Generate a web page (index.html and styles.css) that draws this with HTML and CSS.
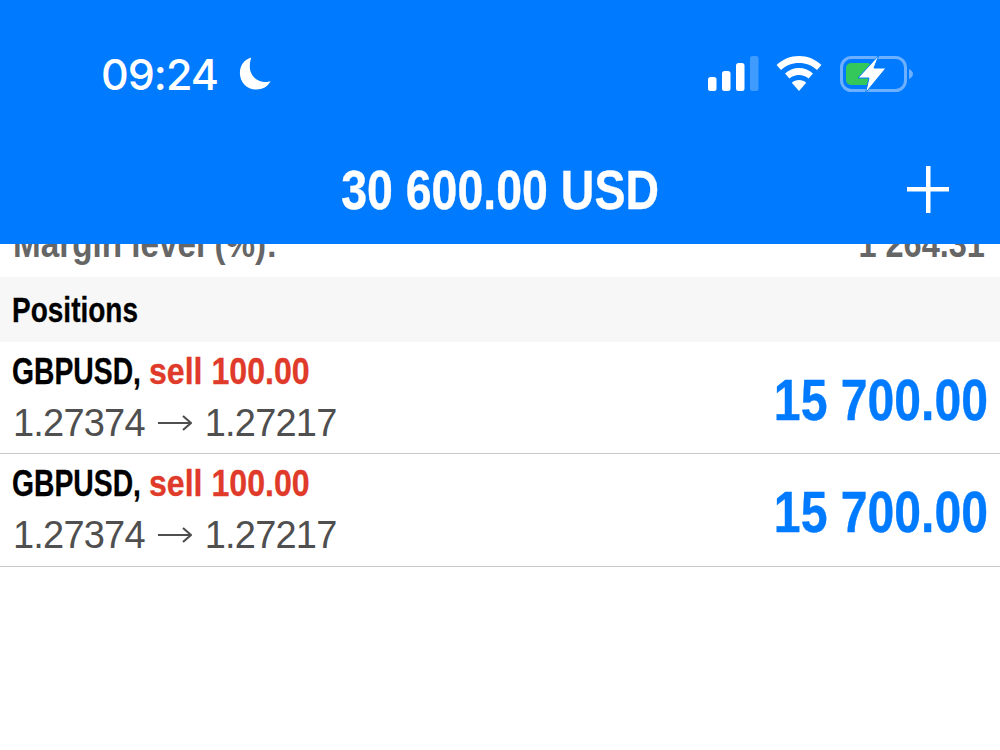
FILE: index.html
```html
<!DOCTYPE html>
<html>

<head>
    <meta charset="utf-8">
    <link rel="stylesheet" href="styles.css">
</head>

<body>
    <div class="top">
        <div class="status">
            <div class="clock">
                <span class="time">09:24</span>
                <svg class="moon" width="34" height="38" viewBox="0 0 36 38">
                    <path fill="#fff" d="M14 1.500C6.500 3.500 2 10 2 18c0 10 7.500 17.500 17.500 17.500 6.500 0 12-3 15-9-1.500.7-3.500 1-5.500 1C19.500 27.500 12.500 20 12.500 11c0-3.500.5-6.500 1.500-9.500z" />
                </svg>
            </div>
            <div class="icons">
                <svg class="signal" width="51" height="36" viewBox="0 0 51 36">
                    <rect x="0" y="21" width="8.500" height="14" rx="2.500" fill="#fff" />
                    <rect x="14" y="15" width="8.500" height="20" rx="2.500" fill="#fff" />
                    <rect x="28" y="7" width="8.500" height="28" rx="2.500" fill="#fff" />
                    <rect x="42" y="0" width="8.500" height="35" rx="2.500" fill="#fff" opacity=".25" />
                </svg>
                <svg class="wifi" width="46" height="36" viewBox="0 0 46 36">
                    <path fill="#fff" d="M23 0C14.500 0 6.500 3.300.6 9l4.400 5C9.800 9.500 16 7 23 7s13.200 2.500 18 7l4.400-5C39.500 3.300 31.500 0 23 0z" />
                    <path fill="#fff" d="M23 12c-5.500 0-10.300 2-14 5.500l4.400 5C16 20.200 19.300 19 23 19s7 1.200 9.600 3.500l4.400-5C33.300 14 28.500 12 23 12z" />
                    <path fill="#fff" d="M23 24c-2.800 0-5.300 1-7.200 2.800L23 35l7.200-8.200C28.300 25 25.800 24 23 24z" />
                </svg>
                <svg class="battery" width="74" height="38" viewBox="0 0 74 38">
                    <rect x="1.500" y="2.500" width="64" height="33" rx="10" fill="none" stroke="#6db0ff" stroke-width="3" />
                    <rect x="6" y="8" width="26" height="22" rx="5" fill="#34c759" />
                    <path fill="#6db0ff" d="M69 14c2.500 1 4 3 4 5s-1.500 4-4 5z" />
                    <path fill="#fff" stroke="#007aff" stroke-width="1" stroke-linejoin="round" d="M39 0 18 23h11l-3.500 15L46 13H34z" />
                </svg>
            </div>
        </div>
        <div class="bar">
            <span class="balance"><span class="squeeze">30 600.00 USD</span></span>
            <svg class="plus" width="42" height="47" viewBox="0 0 42 47">
                <rect x="19" y="0" width="4.500" height="47" fill="#fff" />
                <rect x="0" y="21" width="42" height="4.500" fill="#fff" />
            </svg>
        </div>
    </div>

    <div class="cut-row">
        <span class="squeeze-left">Margin level (%):</span>
        <span class="squeeze-right">1 264.31</span>
    </div>

    <div class="section">
        <span class="squeeze-left">Positions</span>
    </div>

    <div class="pos">
        <div class="pos-info">
            <div class="pos-title">GBPUSD, <span class="sell">sell 100.00</span></div>
            <div class="pos-price">
                <span>1.27374</span>
                <svg class="arrow" width="34" height="18" viewBox="0 0 34 18">
                    <path fill="none" stroke="#4f4f4f" stroke-width="2.200" d="M0 9h33M25 2l8 7-8 7" />
                </svg>
                <span>1.27217</span>
            </div>
        </div>
        <div class="profit"><span class="squeeze-right">15 700.00</span></div>
    </div>
    <div class="pos">
        <div class="pos-info">
            <div class="pos-title">GBPUSD, <span class="sell">sell 100.00</span></div>
            <div class="pos-price">
                <span>1.27374</span>
                <svg class="arrow" width="34" height="18" viewBox="0 0 34 18">
                    <path fill="none" stroke="#4f4f4f" stroke-width="2.200" d="M0 9h33M25 2l8 7-8 7" />
                </svg>
                <span>1.27217</span>
            </div>
        </div>
        <div class="profit"><span class="squeeze-right">15 700.00</span></div>
    </div>
</body>

</html>
```
FILE: styles.css
```css
* {
    padding: 0;
    margin: 0;
    box-sizing: border-box;
}

body {
    background: #fff;
    font-family: "Liberation Sans", Arial, sans-serif;
    overflow: hidden;
}

/* the screenshot is stretched tall, so the text gets squeezed sideways */
.squeeze,
.squeeze-left,
.squeeze-right {
    display: inline-block;
    white-space: nowrap;
}

.squeeze {
    transform: scaleX(0.845);
}

.squeeze-left {
    transform: scaleX(0.875);
    transform-origin: left center;
}

.squeeze-right {
    transform: scaleX(0.855);
    transform-origin: right center;
}

.top {
    height: 244px;
    background: #007aff;
    color: #fff;
}

.status {
    height: 148px;
    padding: 0 86px 0 101px;
    display: flex;
    justify-content: space-between;
    align-items: center;
}

.clock {
    display: flex;
    align-items: center;
    gap: 20px;
}

.time {
    font-size: 43px;
    font-family: Inter, "Liberation Sans", sans-serif;
    font-weight: 500;
    letter-spacing: -1px;
}

.icons {
    display: flex;
    align-items: center;
}

.wifi {
    margin-left: 17px;
}

.battery {
    margin-left: 18px;
}

.bar {
    height: 96px;
    position: relative;
    display: flex;
    justify-content: center;
    align-items: flex-start;
}

.balance {
    font-size: 55px;
    line-height: 84px;
    font-weight: bold;
    -webkit-text-stroke: 0.4px #fff;
}

.plus {
    position: absolute;
    right: 51px;
    top: 18px;
}

.cut-row {
    height: 33px;
    overflow: hidden;
    display: flex;
    justify-content: space-between;
    align-items: flex-end;
    padding: 0 15px 11px 13px;
    font-size: 38px;
    line-height: 44px;
    font-weight: bold;
    color: #666;
}

.section {
    height: 65px;
    background: #f7f7f7;
    padding: 0 12px;
    font-size: 35px;
    line-height: 65px;
    font-weight: bold;
    color: #000;
    -webkit-text-stroke: 0.3px #000;
}

.section .squeeze-left {
    transform: scaleX(0.8);
}

.pos {
    height: 112px;
    padding: 7px 12px 0;
    display: flex;
    justify-content: space-between;
    border-bottom: 1px solid #c8c8c8;
}

.pos:last-child {
    height: 113px;
}

.pos-title {
    font-size: 37px;
    line-height: 46px;
    font-weight: bold;
    color: #000;
    white-space: nowrap;
    transform: scaleX(0.765);
    transform-origin: left center;
    -webkit-text-stroke: 0.3px #000;
}

.sell {
    display: inline-block;
    color: #e03a2a;
    transform: scaleX(1.135);
    transform-origin: left center;
    -webkit-text-stroke: 0.3px #e03a2a;
}

.pos-price {
    display: flex;
    align-items: center;
    gap: 13px;
    padding-left: 1px;
    margin-top: 3px;
    font-size: 38px;
    line-height: 50px;
    letter-spacing: -0.8px;
    color: #4f4f4f;
}

.profit {
    font-size: 58px;
    line-height: 101px;
    font-weight: bold;
    color: #007aff;
    -webkit-text-stroke: 0.4px #007aff;
}

.profit .squeeze-right {
    transform: scaleX(0.83);
}
```
